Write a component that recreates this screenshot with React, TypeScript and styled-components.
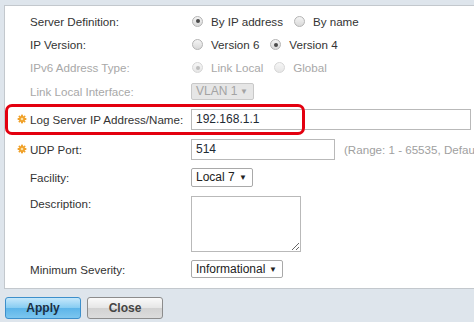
import React from "react";
import styled, { createGlobalStyle, css } from "styled-components";

const GlobalStyle = createGlobalStyle`
  html, body {
    margin: 0;
    padding: 0;
    width: 474px;
    height: 322px;
    overflow: hidden;
    background: #dee5ec;
    font-family: "Liberation Sans", Arial, sans-serif;
    font-size: 11.6px;
    color: #333333;
  }
`;

const Page = styled.div`
  display: flex;
  flex-direction: column;
  height: 322px;
  padding-top: 5px;
  box-sizing: border-box;
`;

const Panel = styled.div`
  position: relative;
  margin-left: 4px;
  background: #ffffff;
  border: 1px solid #c3c8cd;
  border-right: none;
  padding: 3px 0 6px 0;
  overflow: hidden;
`;

const Row = styled.div<{ h: number; top?: boolean }>`
  display: grid;
  grid-template-columns: 186px 1fr;
  height: ${(p) => p.h}px;
  align-items: ${(p) => (p.top ? "start" : "center")};
  ${(p) =>
    p.top &&
    css`
      padding-top: 5px;
      box-sizing: border-box;
    `}
`;

const Label = styled.div<{ disabled?: boolean; top?: boolean }>`
  display: flex;
  align-items: center;
  padding-left: 9px;
  color: ${(p) => (p.disabled ? "#a8a8a8" : "#333333")};
  ${(p) =>
    p.top &&
    css`
      padding-top: 1px;
    `}
`;

const IconSlot = styled.span`
  width: 16px;
  height: 12px;
  display: flex;
  align-items: center;
  justify-content: center;
`;

const Controls = styled.div`
  display: flex;
  align-items: center;
  white-space: nowrap;
  overflow: hidden;
`;

const RadioItem = styled.label<{ disabled?: boolean }>`
  display: flex;
  align-items: center;
  margin-right: 10px;
  color: ${(p) => (p.disabled ? "#a8a8a8" : "#333333")};
`;

const RadioCircle = styled.span<{ checked?: boolean; disabled?: boolean }>`
  width: 11px;
  height: 11px;
  border-radius: 50%;
  box-sizing: border-box;
  border: 1px solid ${(p) => (p.disabled ? "#d6d6d6" : "#b4b4b4")};
  background: ${(p) =>
    p.disabled
      ? "linear-gradient(#f6f6f6, #e6e6e6)"
      : "linear-gradient(#f4f4f4, #d9d9d9)"};
  margin-left: 1px;
  margin-right: 8px;
  display: flex;
  align-items: center;
  justify-content: center;
  &::after {
    content: "";
    display: ${(p) => (p.checked ? "block" : "none")};
    width: 4px;
    height: 4px;
    border-radius: 50%;
    background: ${(p) => (p.disabled ? "#bdbdbd" : "#4a4a4a")};
  }
`;

const SelectBox = styled.div<{ disabled?: boolean; w: number; h: number }>`
  display: flex;
  align-items: center;
  justify-content: space-between;
  width: ${(p) => p.w}px;
  height: ${(p) => p.h}px;
  box-sizing: border-box;
  padding: 0 5px 0 4px;
  border: 1px solid ${(p) => (p.disabled ? "#c8c8c8" : "#a9a9a9")};
  border-radius: 2px;
  background: ${(p) => (p.disabled ? "#e6e6e6" : "#ffffff")};
  color: ${(p) => (p.disabled ? "#a3a3a3" : "#222222")};
  font-size: 12px;
`;

const Caret = styled.span<{ disabled?: boolean }>`
  font-size: 8px;
  color: ${(p) => (p.disabled ? "#a3a3a3" : "#222222")};
`;

const TextInput = styled.input<{ w: number }>`
  width: ${(p) => p.w}px;
  height: 21px;
  flex-shrink: 0;
  box-sizing: border-box;
  border: 1px solid #b9b9b9;
  padding: 0 4px;
  font-family: "Liberation Sans", Arial, sans-serif;
  font-size: 12px;
  color: #1e2a33;
  outline: none;
`;

const Hint = styled.span`
  margin-left: 9px;
  color: #a0a0a0;
`;

const TextArea = styled.textarea`
  width: 110px;
  height: 56px;
  box-sizing: border-box;
  border: 1px solid #b9b9b9;
  resize: both;
  outline: none;
  font-family: "Liberation Sans", Arial, sans-serif;
`;

const Highlight = styled.div`
  position: absolute;
  left: 0;
  top: 98px;
  width: 300px;
  height: 31px;
  box-sizing: border-box;
  border: 3px solid #e3000f;
  border-radius: 7px;
  pointer-events: none;
`;

const Footer = styled.div`
  display: flex;
  gap: 6px;
  padding: 8px 0 0 5px;
`;

const Button = styled.button<{ primary?: boolean }>`
  width: 76px;
  height: 22px;
  border-radius: 3px;
  font-family: "Liberation Sans", Arial, sans-serif;
  font-size: 12px;
  font-weight: bold;
  padding: 0;
  ${(p) =>
    p.primary
      ? css`
          border: 1px solid #3c8fcb;
          background: linear-gradient(#c6e8fb, #86ccf2 50%, #5db5e9 52%, #7cc6ef);
          color: #1c2f42;
        `
      : css`
          border: 1px solid #8c8c8c;
          background: linear-gradient(#fafafa, #e6e6e6 50%, #d2d2d2 52%, #dcdcdc);
          color: #444444;
        `}
`;

const Star = () => (
  <svg width="10" height="10" viewBox="0 0 10 10">
    {[0, 45, 90, 135].map((a) => (
      <rect
        key={a}
        x="4"
        y="0.5"
        width="2"
        height="9"
        rx="0.8"
        fill="#f0a028"
        transform={`rotate(${a} 5 5)`}
      />
    ))}
    <circle cx="5" cy="5" r="2.6" fill="#f0a028" />
    <circle cx="5" cy="5" r="1.3" fill="#fbe2a8" />
  </svg>
);

const Radio = ({
  label,
  checked,
  disabled,
}: {
  label: string;
  checked?: boolean;
  disabled?: boolean;
}) => (
  <RadioItem disabled={disabled}>
    <RadioCircle checked={checked} disabled={disabled} />
    {label}
  </RadioItem>
);

export default function App() {
  return (
    <>
      <GlobalStyle />
      <Page>
        <Panel>
          <Row h={24}>
            <Label>
              <IconSlot />
              Server Definition:
            </Label>
            <Controls>
              <Radio label="By IP address" checked />
              <Radio label="By name" />
            </Controls>
          </Row>
          <Row h={23}>
            <Label>
              <IconSlot />
              IP Version:
            </Label>
            <Controls>
              <Radio label="Version 6" />
              <Radio label="Version 4" checked />
            </Controls>
          </Row>
          <Row h={23}>
            <Label disabled>
              <IconSlot />
              IPv6 Address Type:
            </Label>
            <Controls>
              <Radio label="Link Local" checked disabled />
              <Radio label="Global" disabled />
            </Controls>
          </Row>
          <Row h={24}>
            <Label disabled>
              <IconSlot />
              Link Local Interface:
            </Label>
            <Controls>
              <SelectBox disabled w={63} h={17}>
                VLAN 1 <Caret disabled>▼</Caret>
              </SelectBox>
            </Controls>
          </Row>
          <Row h={32}>
            <Label>
              <IconSlot>
                <Star />
              </IconSlot>
              Log Server IP Address/Name:
            </Label>
            <Controls>
              <TextInput w={280} defaultValue="192.168.1.1" />
            </Controls>
          </Row>
          <Row h={28}>
            <Label>
              <IconSlot>
                <Star />
              </IconSlot>
              UDP Port:
            </Label>
            <Controls>
              <TextInput w={144} defaultValue="514" />
              <Hint>(Range: 1 - 65535, Default: 514)</Hint>
            </Controls>
          </Row>
          <Row h={28}>
            <Label>
              <IconSlot />
              Facility:
            </Label>
            <Controls>
              <SelectBox w={62} h={19}>
                Local 7 <Caret>▼</Caret>
              </SelectBox>
            </Controls>
          </Row>
          <Row h={65} top>
            <Label top>
              <IconSlot />
              Description:
            </Label>
            <Controls>
              <TextArea />
            </Controls>
          </Row>
          <Row h={26}>
            <Label>
              <IconSlot />
              Minimum Severity:
            </Label>
            <Controls>
              <SelectBox w={92} h={18}>
                Informational <Caret>▼</Caret>
              </SelectBox>
            </Controls>
          </Row>
          <Highlight />
        </Panel>
        <Footer>
          <Button primary>Apply</Button>
          <Button>Close</Button>
        </Footer>
      </Page>
    </>
  );
}
